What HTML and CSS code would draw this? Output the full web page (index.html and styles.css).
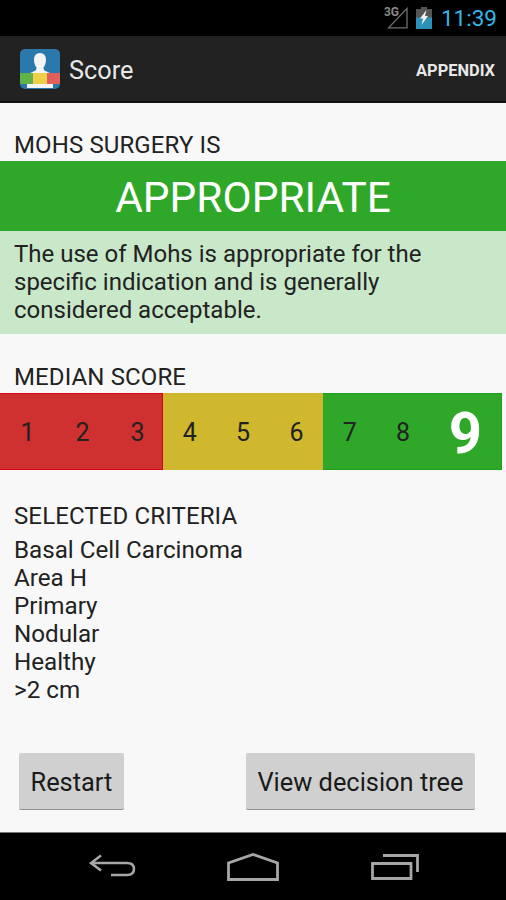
FILE: index.html
```html
<!DOCTYPE html>
<html lang="en">
<head>
<meta charset="utf-8">
<title>Score</title>
<link rel="stylesheet" href="styles.css">
</head>
<body>
<div class="phone">
  <header class="status">
    <span class="net">3G</span>
    <svg class="signal" width="21" height="22" viewBox="0 0 21 22"><path d="M20 1.500V20.800H1.500Z" fill="none" stroke="#6e6e6e" stroke-width="1.300"/></svg>
    <svg class="battery" width="16" height="22" viewBox="0 0 16 22"><path d="M5 0H11V2H16V22H0V2H5Z" fill="#555"/><path d="M0 10.500H16V22H0Z" fill="#2d90b8"/><path d="M10.500 3L4 11.500H7L5.500 18L12 9H9Z" fill="#f2f2f2"/></svg>
    <span class="time">11:39</span>
  </header>
  <nav class="actionbar">
    <svg class="logo" width="40" height="40" viewBox="0 0 40 40">
      <defs><clipPath id="r"><rect width="40" height="40" rx="5"/></clipPath></defs>
      <g clip-path="url(#r)">
        <rect width="40" height="40" fill="#2b78ad"/>
        <path d="M20 4C23.500 4 26 6.800 26 10.500C26 14 25 16.500 23.500 18.500C23.500 20.500 24 21.500 26 22.300L31 24.500V26H9V24.500L14 22.300C16 21.500 16.500 20.500 16.500 18.500C15 16.500 14 14 14 10.500C14 6.800 16.500 4 20 4Z" fill="#f4f4f4"/>
        <rect y="24" width="13" height="11" fill="#5fb348"/>
        <rect x="13" y="24" width="14" height="11" fill="#ecd04a"/>
        <rect x="27" y="24" width="13" height="11" fill="#e2605c"/>
        <rect x="7" y="35" width="26" height="4" fill="#f4f4f4"/>
      </g>
    </svg>
    <h1 class="title">Score</h1>
    <a class="appendix">APPENDIX</a>
  </nav>
  <main class="content">
    <h2 class="label first">MOHS SURGERY IS</h2>
    <div class="verdict">APPROPRIATE</div>
    <p class="explain">The use of Mohs is appropriate for the specific indication and is generally considered acceptable.</p>
    <h2 class="label median">MEDIAN SCORE</h2>
    <div class="scale">
      <div class="seg red"><span>1</span><span>2</span><span>3</span></div>
      <div class="seg yellow"><span>4</span><span>5</span><span>6</span></div>
      <div class="seg green"><span>7</span><span>8</span><b>9</b></div>
    </div>
    <h2 class="label criteria">SELECTED CRITERIA</h2>
    <ul class="list">
      <li>Basal Cell Carcinoma</li>
      <li>Area H</li>
      <li>Primary</li>
      <li>Nodular</li>
      <li>Healthy</li>
      <li>&gt;2 cm</li>
    </ul>
    <div class="actions">
      <button class="btn">Restart</button>
      <button class="btn">View decision tree</button>
    </div>
  </main>
  <footer class="navbar">
    <svg width="48" height="26" viewBox="0 0 48 26"><path d="M12 1.500L2 9L12 16.500M2 9H38C42 9 45 11 45 15C45 19 42 21 38 21H22" fill="none" stroke="#a6a6a6" stroke-width="2.600"/></svg>
    <svg width="52" height="28" viewBox="0 0 52 28"><path d="M1.500 26.500V10L26 1.500L50.500 10V26.500Z" fill="none" stroke="#a6a6a6" stroke-width="2.800"/></svg>
    <svg width="50" height="26" viewBox="-2 0 50 26"><path d="M1.500 9.500H40V24.500H1.500Z" fill="none" stroke="#a6a6a6" stroke-width="2.800"/><path d="M12 1.500H46.500V18" fill="none" stroke="#a6a6a6" stroke-width="2.800"/></svg>
  </footer>
</div>
</body>
</html>
```
FILE: styles.css
```css
* { box-sizing: border-box; }
html, body { margin: 0; padding: 0; }
body { font-family: Roboto, "Liberation Sans", sans-serif; background: #000; }
.phone { width: 506px; height: 900px; display: flex; flex-direction: column; overflow: hidden; background: #f8f8f8; }

.status { height: 36px; background: #000; display: flex; align-items: center; justify-content: flex-end; padding-right: 9px; }
.net { font-size: 12px; line-height: 12px; font-weight: 700; color: #8a8a8a; align-self: flex-start; margin-top: 6px; margin-right: -12px; }
.signal { margin-right: 8px; }
.battery { margin-right: 9px; }
.time { font-size: 22.500px; color: #33b5e5; line-height: 36px; }

.actionbar { height: 67px; background: #222; border-bottom: 2px solid #111; display: flex; align-items: center; padding: 0 11px 0 20px; }
.logo { margin-right: 9px; }
.title { margin: 3px 0 0; font-size: 25.300px; font-weight: 400; color: #e8e8e8; flex: 1; }
.appendix { margin-top: 3px; font-size: 16.400px; font-weight: 700; color: #e8e8e8; }

.content { flex: 1; display: flex; flex-direction: column; min-height: 0; }
.label { margin: 0; padding-left: 14px; font-size: 24px; letter-spacing: .12px; font-weight: 400; line-height: 28px; color: #222; }
.first { margin-top: 28px; }
.verdict { height: 70px; margin-top: 2px; background: #2fa829; color: #fff; font-size: 42.400px; line-height: 73px; text-align: center; }
.explain { margin: 0; height: 103px; padding: 9px 14px 0; background: #c9e8c9; font-size: 24px; line-height: 28px; color: #222; }
.median { margin-top: 29px; }
.scale { display: flex; width: 502px; height: 77px; margin-top: 2px; font-size: 25px; color: #222; }
.seg { display: flex; align-items: center; padding-top: 2px; }
.seg span { flex: none; width: 53.400px; text-align: center; }
.seg b { flex: 1; text-align: center; font-size: 58px; font-weight: 700; color: #fff; }
.red { width: 163px; background: #cf3030; border: 1px solid #d9001c; border-left: 0; }
.red span { width: 55px; }
.yellow { width: 160px; background: #cfb82d; }
.green { flex: 1; background: #2fa829; border: 1px solid #1ea01e; border-left: 0; }
.criteria { margin-top: 32px; }
.list { list-style: none; margin: 6px 0 0; padding: 0 0 0 14px; font-size: 24.200px; line-height: 28px; color: #222; }
.actions { display: flex; justify-content: space-between; padding: 0 31px 0 19px; margin-top: 49px; }
.btn { height: 57px; padding: 2px 11.500px 0; border: 0; border-bottom: 1px solid #909090; border-radius: 2px; background: #d0d0d0; font-family: inherit; font-size: 25.400px; color: #1a1a1a; }

.navbar { height: 68px; background: #000; border-top: 1px solid #777; display: flex; align-items: center; gap: 90px; padding-left: 89px; }
```
